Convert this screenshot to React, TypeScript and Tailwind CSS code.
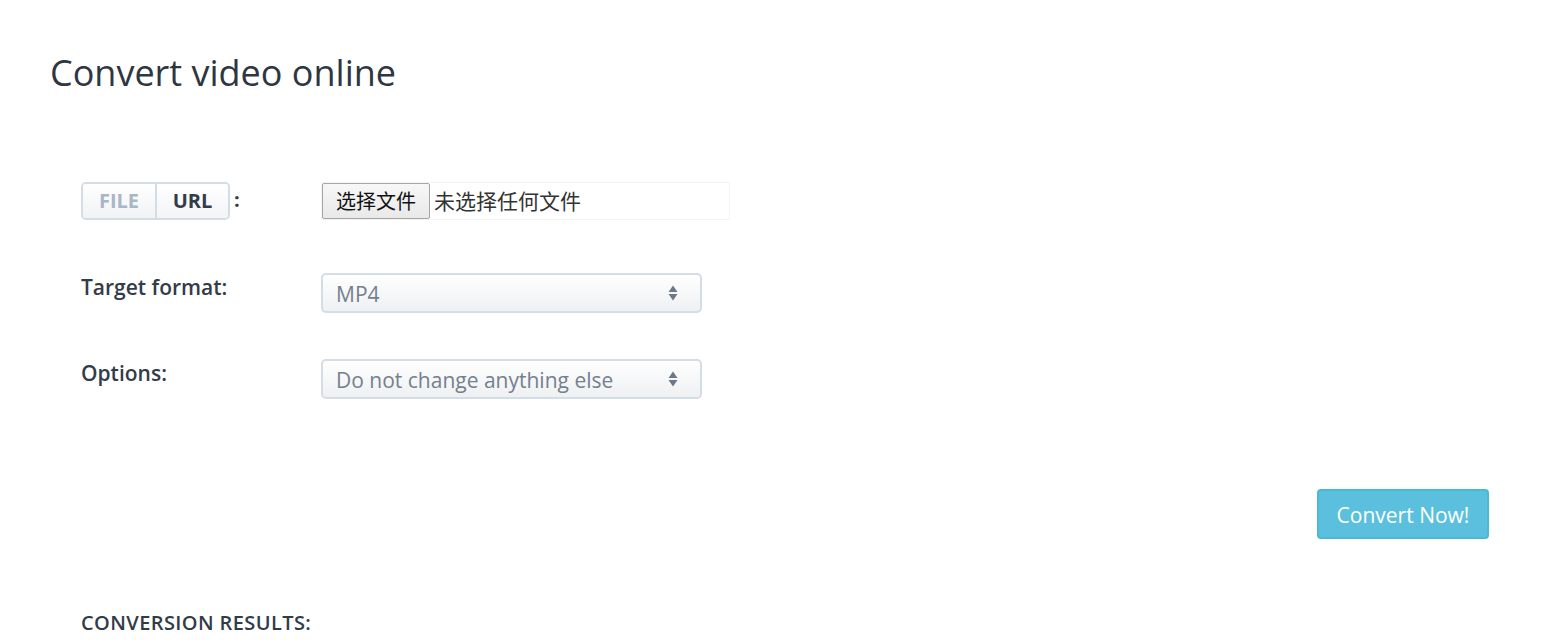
import React from "react";

function Arrows() {
  return (
    <svg width="10" height="20" viewBox="0 0 10 20" className="absolute right-[22px] top-1/2 -translate-y-1/2">
      <path d="M0.5 9 L5 2.5 L9.5 9 Z" fill="#6e7987" />
      <path d="M0.5 11 L5 17.5 L9.5 11 Z" fill="#6e7987" />
    </svg>
  );
}

function Select({ value }: { value: string }) {
  return (
    <div className="relative w-[381px] h-[40px] rounded-[5px] border-2 border-[#d3dde6] bg-gradient-to-b from-[#ffffff] to-[#eef0f2] flex items-center pl-[13px] pt-[3px] text-[21px] text-[#75808d]">
      {value}
      <Arrows />
    </div>
  );
}

export default function App() {
  return (
    <div
      className="min-h-[642px] bg-white text-[#2d3540] pl-[50px] pr-[77px]"
      style={{ fontFamily: '"Open Sans", "Noto Sans", sans-serif' }}
    >
      <h1 className="pt-[53px] text-[36px] leading-[40px] font-normal text-[#2e3642]">Convert video online</h1>

      <div className="pl-[31px] pt-[89px]">
        {/* Row 1 */}
        <div className="flex items-center h-[38px]">
          <div className="w-[240px] flex items-center">
            <div className="flex h-[38px] rounded-[5px] border-2 border-[#d3dde6] overflow-hidden">
              <div className="w-[74px] flex items-center justify-center text-[20px] font-bold text-[#a9b6c7] bg-gradient-to-b from-[#ffffff] to-[#f0f2f4] border-r-2 border-[#d3dde6]">
                FILE
              </div>
              <div className="w-[71px] flex items-center justify-center text-[20px] font-bold text-[#323c4a] bg-gradient-to-b from-[#ffffff] to-[#f3f4f6]">
                URL
              </div>
            </div>
            <span className="ml-[4px] text-[20px] font-bold text-[#323c4a] -mt-[2px]">:</span>
          </div>
          <div
            className="flex items-center h-[38px] w-[409px] border border-[#f4f4f4]"
            style={{ fontFamily: '"Noto Sans CJK SC", "Noto Sans", sans-serif' }}
          >
            <div className="h-[36px] w-[108px] flex items-center justify-center border border-[#a6a6a6] rounded-[2px] bg-gradient-to-b from-[#f7f7f7] to-[#e9e9e9] text-[20px] text-[#111]">
              选择文件
            </div>
            <span className="ml-[4px] text-[21px] text-[#333]">未选择任何文件</span>
          </div>
        </div>

        {/* Row 2 */}
        <div className="flex items-start mt-[53px]">
          <div className="w-[240px] -mt-[1px] text-[21px] font-semibold text-[#333c48]">Target format:</div>
          <Select value="MP4" />
        </div>

        {/* Row 3 */}
        <div className="flex items-start mt-[46px]">
          <div className="w-[240px] -mt-[1px] text-[21px] font-semibold text-[#333c48]">Options:</div>
          <Select value="Do not change anything else" />
        </div>
      </div>

      <div className="flex justify-end mt-[90px]">
        <button className="h-[50px] w-[172px] rounded-[4px] bg-[#5bc0de] border-2 border-[#4ab8d8] text-white text-[21px] font-normal pt-[3px]">
          Convert Now!
        </button>
      </div>

      <div className="pl-[31px] mt-[69px] text-[20px] font-semibold text-[#323c48] tracking-[0.4px]">
        CONVERSION RESULTS:
      </div>
    </div>
  );
}
